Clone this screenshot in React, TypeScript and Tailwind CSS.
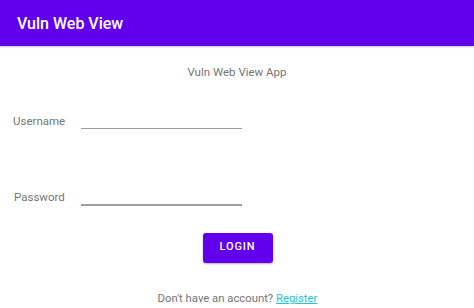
export default function App() {
  return (
    <div className="w-[474px] h-[308px] bg-white overflow-hidden font-['Roboto',sans-serif]">
      {/* barra superior */}
      <div className="h-[46px] bg-[#6200ee] flex items-center pl-[17px] shadow-[0_1px_2px_rgba(0,0,0,0.25)]">
        <span className="text-white text-[16px] font-medium leading-none pt-[1px]">Vuln Web View</span>
      </div>

      <div className="pt-[21px] text-center text-[11.5px] text-[#757575] leading-none">Vuln Web View App</div>

      {/* formulario */}
      <div className="flex items-end pt-[37px] pl-[13px]">
        <span className="w-[68px] text-[11.5px] text-[#757575] leading-none">Username</span>
        <div className="w-[161px] h-[1.5px] bg-[#9e9e9e] mb-[-2px]" />
      </div>

      <div className="flex items-end pt-[65px] pl-[14px]">
        <span className="w-[67px] text-[11.5px] text-[#757575] leading-none">Password</span>
        <div className="w-[161px] h-[1.5px] bg-[#9e9e9e] mb-[-2px]" />
      </div>

      <div className="flex justify-center pt-[29px] pl-[1px]">
        <button className="w-[70px] h-[30px] bg-[#6200ee] rounded-[3px] text-white text-[11px] font-medium tracking-[0.08em] shadow-[0_1px_2px_rgba(0,0,0,0.3)]">
          LOGIN
        </button>
      </div>

      <div className="pt-[30px] text-center text-[11.3px] text-[#757575] leading-none pl-[1px]">
        Don't have an account? <span className="text-[#1ac8d8] underline">Register</span>
      </div>
    </div>
  );
}
